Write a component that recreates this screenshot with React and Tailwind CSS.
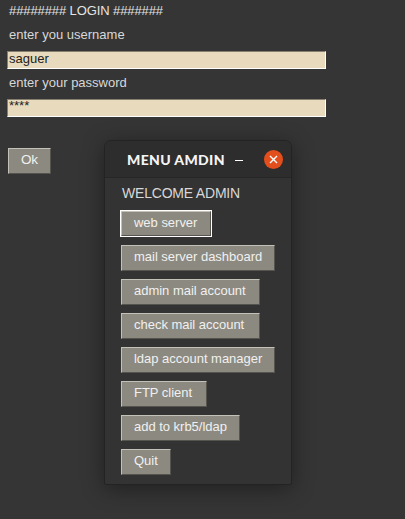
const items = [
  { label: "web server", w: "w-[90px]", focus: true },
  { label: "mail server dashboard", w: "w-[154px]" },
  { label: "admin mail account", w: "w-[139px]" },
  { label: "check mail account", w: "w-[139px]" },
  { label: "ldap account manager", w: "w-[154px]" },
  { label: "FTP client", w: "w-[86px]" },
  { label: "add to krb5/ldap", w: "w-[119px]" },
  { label: "Quit", w: "w-[50px]" },
];

const raised =
  "h-[26px] border border-t-[#c4c2b8] border-l-[#c4c2b8] border-r-[#55544e] border-b-[#55544e] bg-[#8c8a80] text-[#f0f0f0] text-[13px] leading-none text-left pl-[12px] pb-[3px] tracking-[-0.02px]";

function Field({ value, tiny }) {
  return (
    <div
      className={`ml-[7px] pl-px w-[319px] h-[18px] border border-t-[#857f6f] border-l-[#857f6f] border-r-white border-b-white bg-[#e8dbbd] text-[#222222] ${
        tiny ? "text-[13px] leading-[11px]" : "text-[13px] leading-[13px]"
      }`}
    >
      {value}
    </div>
  );
}

export default function App() {
  return (
    <div className="relative w-[405px] h-[519px] overflow-hidden bg-[#353535] font-['Liberation_Sans',sans-serif]">
      <div className="flex flex-col pt-[3px]">
        <p className="ml-[9px] text-[13px] leading-[15px] tracking-[-0.1px] text-[#e4e4e4]">######## LOGIN #######</p>
        <p className="ml-[9px] mt-[9px] text-[13px] leading-[15px] text-[#d8d8d8]">enter you username</p>
        <div className="mt-[9px]"><Field value="saguer" /></div>
        <p className="ml-[9px] mt-[6px] text-[13px] leading-[15px] text-[#d8d8d8]">enter your password</p>
        <div className="mt-[9px]"><Field value="****" tiny /></div>
        <button className={`ml-[8px] mt-[31px] w-[43px] ${raised} !text-center !pl-0 !text-[13.5px]`}>Ok</button>
      </div>

      <div className="absolute left-[104px] top-[140px] w-[188px] h-[345px] rounded-t-[7px] rounded-b-[2px] border border-[#232323] bg-[#333333] shadow-[0_4px_22px_rgba(0,0,0,0.4)]">
        <div className="flex items-center h-[37px] border-b border-[#262626] bg-[#2d2d2d] rounded-t-[6px]">
          <span className="ml-[22px] font-['Lato',sans-serif] font-black text-[14px] tracking-[0.35px] text-[#f4f4f4]">MENU AMDIN</span>
          <span className="ml-[10px] mt-[2px] w-[8px] h-px bg-white"></span>
          <span className="ml-auto mr-[8px] flex items-center justify-center w-[19px] h-[19px] rounded-full bg-[#e34f1c]">
            <svg width="9" height="9" viewBox="0 0 9 9" fill="none" stroke="white" strokeWidth="1.4">
              <path d="M1 1 L8 8 M8 1 L1 8" />
            </svg>
          </span>
        </div>
        <p className="ml-[17px] mt-[7px] text-[14px] leading-[16px] tracking-[-0.2px] text-[#d8d8d8]">WELCOME ADMIN</p>
        <div className="mt-[9px] ml-[15px] flex flex-col items-start gap-[8px]">
          {items.map((it) =>
            it.focus ? (
              <div key={it.label} className="border border-white">
                <button className={`${raised} ${it.w} !h-[25px] block`}>{it.label}</button>
              </div>
            ) : (
              <button key={it.label} className={`${raised} ${it.w} ml-px block`}>{it.label}</button>
            )
          )}
        </div>
      </div>
    </div>
  );
}
